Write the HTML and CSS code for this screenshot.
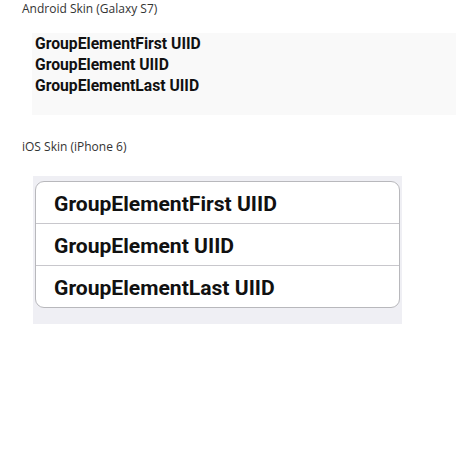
FILE: index.html
```html
<!DOCTYPE html>
<html>
<head>
<meta charset="utf-8">
<link rel="stylesheet" href="styles.css">
</head>
<body>
<div class="page">
  <div class="caption cap-android">Android Skin (Galaxy S7)</div>
  <div class="android">
    <div class="a-item">GroupElementFirst UIID</div>
    <div class="a-item">GroupElement UIID</div>
    <div class="a-item">GroupElementLast UIID</div>
  </div>
  <div class="caption cap-ios">iOS Skin (iPhone 6)</div>
  <div class="ios">
    <div class="ios-card">
      <div class="i-item">GroupElementFirst UIID</div>
      <div class="i-item">GroupElement UIID</div>
      <div class="i-item">GroupElementLast UIID</div>
    </div>
  </div>
</div>
</body>
</html>
```
FILE: styles.css
```css
html, body {
  margin: 0;
  padding: 0;
  background: #ffffff;
}
.page {
  display: flex;
  flex-direction: column;
  align-items: flex-start;
}
.caption {
  font-family: "Open Sans", "Noto Sans", sans-serif;
  font-size: 12px;
  color: #333333;
  margin-left: 22px;
  line-height: 16px;
}
.cap-android {
  margin-top: 1px;
}
.android {
  margin-top: 16px;
  margin-left: 32px;
  width: 424px;
  height: 82px;
  background: #f9f9f9;
  box-sizing: border-box;
  padding: 0 0 0 3px;
  display: flex;
  flex-direction: column;
}
.a-item {
  font-family: Roboto, "Liberation Sans", sans-serif;
  font-weight: 700;
  font-size: 15.7px;
  line-height: 21px;
  color: #111111;
}
.cap-ios {
  margin-top: 24px;
}
.ios {
  margin-top: 21px;
  margin-left: 33px;
  width: 369px;
  height: 148px;
  box-sizing: border-box;
  background: #efeff4;
  padding: 5px 2px 0 2px;
}
.ios-card {
  background: #ffffff;
  border: 1px solid #b8b8bc;
  border-radius: 9px;
  display: flex;
  flex-direction: column;
}
.i-item {
  font-family: Roboto, "Liberation Sans", sans-serif;
  font-weight: 700;
  font-size: 21.1px;
  height: 41px;
  line-height: 43px;
  padding-left: 18px;
  color: #111111;
  border-top: 1px solid #c8c7cc;
}
.i-item:first-child {
  border-top: none;
}
```
